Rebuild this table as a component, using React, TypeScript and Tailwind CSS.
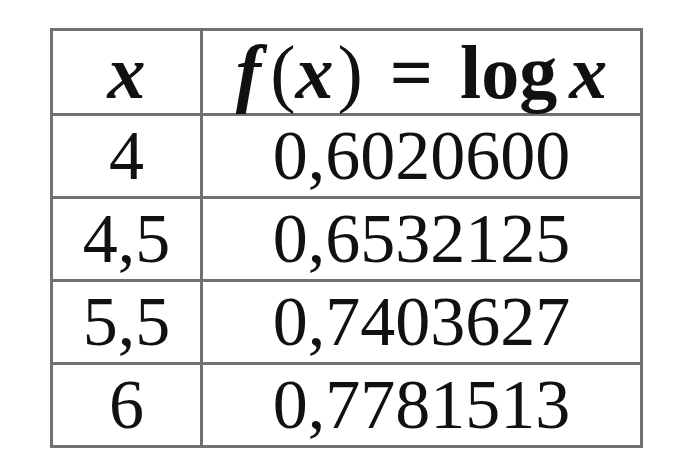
import React from 'react'

const rows = [
  { x: '4', fx: '0,6020600' },
  { x: '4,5', fx: '0,6532125' },
  { x: '5,5', fx: '0,7403627' },
  { x: '6', fx: '0,7781513' },
]

export default function App() {
  const cell = 'border-[3px] border-[#717171] p-0 text-center align-middle'
  return (
    <div className="w-[700px] h-[473px] bg-white pt-[28px] pl-[50px] text-[#111]" style={{ fontFamily: '"Liberation Serif", "Times New Roman", serif' }}>
      <table className="border-collapse table-fixed w-[593px] text-[70px] leading-none">
        <colgroup>
          <col className="w-[150px]" />
          <col />
        </colgroup>
        <thead>
          <tr className="h-[85px]">
            <th className={`${cell} font-bold italic text-[76px]`}>x</th>
            <th className={`${cell} font-bold text-[76px]`}>
              <span className="italic">f</span>
              <span className="font-normal ml-[9px]">(</span>
              <span className="italic">x</span>
              <span className="font-normal ml-[4px]">)</span>
              <span className="mx-[27px]">=</span>
              <span>log</span>
              <span className="italic ml-[12px]">x</span>
            </th>
          </tr>
        </thead>
        <tbody>
          {rows.map((r) => (
            <tr key={r.x} className="h-[83px]">
              <td className={`${cell} font-normal`}>{r.x}</td>
              <td className={`${cell} font-normal`}>{r.fx}</td>
            </tr>
          ))}
        </tbody>
      </table>
    </div>
  )
}
